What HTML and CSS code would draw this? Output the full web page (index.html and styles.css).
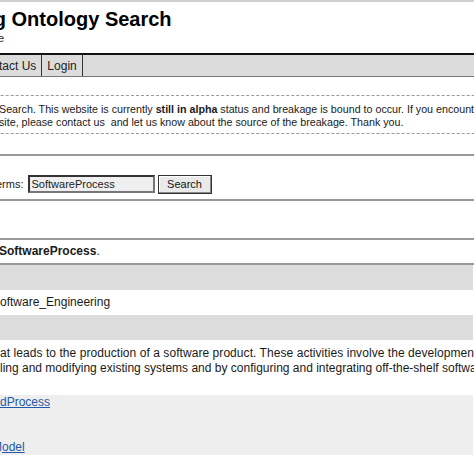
FILE: index.html
```html
<html>

<head>
  <meta charset="UTF-8">
  <meta name="viewport" content="width=device-width, initial-scale=1.0">
  <title>Software Engineering Ontology Search</title>
  <link rel="stylesheet" href="styles.css">
</head>

<body>
  <div class="viewport">
    <div class="page">
      <header class="header">
        <h1 class="title"><span class="lead lead-title">Software Engineering</span> Ontology Search</h1>
        <div class="subtitle"><span class="lead lead-sub">Knowledge Base</span></div>
      </header>

      <nav class="nav">
        <div class="nav-lead">
          <a class="nav-item" href="#">Home</a>
          <a class="nav-item" href="#">About</a>
        </div>
        <a class="nav-item" href="#">Contact Us</a>
        <a class="nav-item" href="#">Login</a>
      </nav>

      <div class="notice">
        <div class="line"><span class="lead lead-n1">Welcome to the Software Engineering Ontology&nbsp;</span>Search. This website is currently <b>still in alpha</b> status and breakage is bound to occur. If you encounter problems with the web</div>
        <div class="line"><span class="lead lead-n2">web</span>site, please contact us &nbsp;and let us know about the source of the breakage. Thank you.</div>
      </div>

      <hr class="rule rule-top">

      <form class="search">
        <span class="lead lead-search">Search t</span>
        <label class="search-label" for="terms">erms:</label>
        <input class="search-input" id="terms" type="text" value="SoftwareProcess">
        <button class="search-btn" type="button">Search</button>
      </form>

      <hr class="rule rule-search">

      <hr class="rule rule-results">

      <div class="result-head"><span class="lead lead-head">Search results for&nbsp;</span><b>SoftwareProcess</b>.</div>

      <hr class="rule rule-table">

      <div class="row row-gray"></div>
      <div class="row"><span class="lead lead-eng">S</span>oftware_Engineering</div>
      <div class="row row-gray"></div>

      <div class="desc">
        <div class="line line-wide"><span class="lead lead-d1">A set of activities th</span>at leads to the production of a software product. These activities involve the development of new software</div>
        <div class="line"><span class="lead lead-d2">from scratch or by model</span>ling and modifying existing systems and by configuring and integrating off-the-shelf software</div>
      </div>

      <div class="links">
        <div class="link-row link-first"><a href="#"><span class="lead lead-l1">Standar</span>dProcess</a></div>
        <div class="link-row"><a href="#"><span class="lead lead-l2">ProcessM</span>odel</a></div>
      </div>
    </div>
  </div>
</body>

</html>
```

FILE: styles.css
```css
* {
  margin: 0;
  padding: 0;
  box-sizing: border-box;
}

body {
  background: #fff;
  color: #1a1a1a;
  font-family: "Liberation Sans", Arial, sans-serif;
  font-size: 11px;
  border-top: 2px solid #cfcfcf;
}

.viewport {
  width: 474px;
  height: 472px;
  overflow: hidden;
}

.page {
  width: 900px;
  margin-left: -300px;
}

.lead {
  display: inline-block;
  text-align: right;
  white-space: nowrap;
}

.lead-title { width: 306px; }
.lead-sub { width: 304px; }
.lead-n1 { width: 299px; }
.lead-n2 { width: 299px; }
.lead-search { width: 296px; }
.lead-head { width: 299px; }
.lead-eng { width: 300px; }
.lead-d1 { width: 300px; }
.lead-d2 { width: 300px; }
.lead-l1 { width: 300px; }
.lead-l2 { width: 302px; }

.header {
  height: 51px;
  padding-top: 5px;
}

.title {
  font-size: 20px;
  line-height: 24px;
  font-weight: bold;
  color: #000;
  white-space: nowrap;
}

.subtitle {
  margin-top: 1px;
  font-size: 11px;
  line-height: 13px;
}

.nav {
  display: flex;
  height: 24px;
  border-top: 2px solid #111;
  border-bottom: 1px solid #777;
  background: #dcdcdc;
  font-size: 12px;
}

.nav-lead {
  display: flex;
  justify-content: flex-end;
  width: 272px;
}

.nav-item {
  display: block;
  padding: 1px 5px 0;
  line-height: 20px;
  border-right: 1px solid #333;
  color: #222;
  text-decoration: none;
  white-space: nowrap;
}

.notice {
  margin-top: 18px;
  padding: 7px 0 4px;
  border-top: 1px dashed #9a9a9a;
  border-bottom: 1px dashed #9a9a9a;
  font-size: 10.7px;
}

.line {
  white-space: nowrap;
  line-height: 13px;
}

.rule {
  border: 0;
  height: 2px;
  background: #999;
}

.rule-top {
  margin-top: 20px;
}

.search {
  display: flex;
  align-items: center;
  height: 18px;
  margin-top: 19px;
  font-size: 11px;
}

.search-label {
  margin-right: 4px;
}

.search-input {
  width: 127px;
  height: 18px;
  padding: 0 2px;
  border: 2px solid;
  border-color: #333 #777 #777 #333;
  background: #efefef;
  font-family: "Liberation Sans", Arial, sans-serif;
  font-size: 11px;
  color: #222;
}

.search-btn {
  width: 54px;
  height: 19px;
  margin-left: 3px;
  border: 1px solid #333;
  box-shadow: inset -1px -1px 0 #888, inset 1px 1px 0 #fff;
  background: #eaeaea;
  font-family: "Liberation Sans", Arial, sans-serif;
  font-size: 11px;
  color: #111;
}

.rule-search {
  margin-top: 6px;
}

.rule-results {
  margin-top: 37px;
}

.result-head {
  padding-top: 4px;
  font-size: 12px;
  line-height: 15px;
  white-space: nowrap;
}

.rule-table {
  margin-top: 4px;
}

.row {
  width: 773px;
  height: 25px;
  font-size: 12px;
  line-height: 25px;
  white-space: nowrap;
}

.row-gray {
  background: #dddddd;
}

.desc {
  padding-top: 6px;
  font-size: 12px;
}

.desc .line {
  line-height: 15px;
}

.desc .line-wide {
  letter-spacing: 0.06px;
}

.links {
  width: 773px;
  margin-top: 19px;
  background: #eeeeee;
  font-size: 12px;
  line-height: 15px;
}

.link-row {
  height: 15px;
  white-space: nowrap;
}

.link-first {
  height: 45px;
}

.links a {
  color: #2358a8;
}
```
